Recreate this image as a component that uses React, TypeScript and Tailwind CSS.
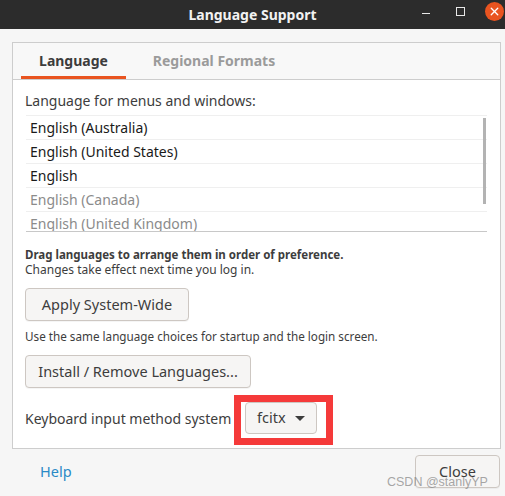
import { X } from "lucide-react";

const rows = [
  { label: "English (Australia)", active: true },
  { label: "English (United States)", active: true },
  { label: "English", active: true },
  { label: "English (Canada)", active: false },
  { label: "English (United Kingdom)", active: false },
];

function Button({ children, className = "" }: { children: React.ReactNode; className?: string }) {
  return (
    <button
      className={
        "h-[33px] rounded-[4px] border border-[#cdc7c2] bg-[#f6f5f4] text-[14.5px] text-[#3d3d3d] shadow-[0_1px_0_rgba(0,0,0,0.04)] " +
        className
      }
    >
      {children}
    </button>
  );
}

export default function App() {
  return (
    <div
      className="relative w-[505px] h-[496px] overflow-hidden bg-[#f6f6f6] text-[#3d3d3d]"
      style={{ fontFamily: '"Noto Sans", "Open Sans", sans-serif' }}
    >
      {/* Title bar */}
      <div className="relative h-[29px] bg-[#2c2c2c] flex items-center justify-center">
        <span className="text-[14px] font-bold text-[#f2f2f2] leading-none">Language Support</span>
        <div className="absolute right-0 top-0 h-[29px] flex items-center">
          <div className="w-[8px] h-[1.5px] bg-[#e8e8e8] mb-[2px] mr-[26px]" />
          <div className="w-[9px] h-[9px] border-[1.5px] border-[#e8e8e8] mb-[6px] mr-[20px]" />
          <div className="w-[19px] h-[19px] rounded-full bg-[#e95420] flex items-center justify-center mb-[7px] mr-[1px]">
            <X size={13} strokeWidth={2.5} className="text-white" />
          </div>
        </div>
      </div>

      {/* Notebook */}
      <div className="ml-[12px] mt-[13px] w-[489px] h-[407px] border border-[#cdcdcd] bg-white flex flex-col">
        <div className="h-[37px] shrink-0 bg-[#f8f8f8] border-b border-[#cdcdcd] flex pl-[8px]">
          <div className="relative w-[105px] flex items-center justify-center">
            <span className="text-[14px] font-bold text-[#3c3c3c] -mt-[2px]">Language</span>
            <div className="absolute left-0 right-0 bottom-0 h-[3px] bg-[#e95420]" />
          </div>
          <div className="w-[176px] flex items-center justify-center">
            <span className="text-[14px] font-bold text-[#9b9b9b] -mt-[2px]">Regional Formats</span>
          </div>
        </div>

        <div className="flex flex-col pl-[12px] pr-[13px]">
          <div className="mt-[12px] h-[18px] leading-[18px] text-[14px] text-[#3d3d3d]">
            Language for menus and windows:
          </div>

          {/* Language list */}
          <div className="relative mt-[5px] ml-[1px] h-[117px] overflow-hidden border-t border-[#efefef] border-b border-b-[#c8c8c8]">
            {rows.map((r) => (
              <div
                key={r.label}
                className={
                  "h-[24px] border-b border-[#efefef] pl-[4px] flex items-center text-[14px] " +
                  (r.active ? "text-[#1a1a1a]" : "text-[#8b8b8b]")
                }
              >
                {r.label}
              </div>
            ))}
            <div className="absolute right-[1px] top-[2px] w-[3px] h-[86px] bg-[#b3b3b3]" />
          </div>

          <div className="mt-[15px] text-[11.5px] leading-[15px] font-bold text-[#3d3d3d]">
            Drag languages to arrange them in order of preference.
          </div>
          <div className="text-[12px] leading-[15px] text-[#3d3d3d]">Changes take effect next time you log in.</div>

          <Button className="mt-[11px] w-[164px]">Apply System-Wide</Button>

          <div className="mt-[8px] text-[11.7px] leading-[15px] text-[#3d3d3d]">
            Use the same language choices for startup and the login screen.
          </div>

          <Button className="mt-[11px] w-[226px]">Install / Remove Languages...</Button>

          <div className="mt-[14px] flex items-center">
            <span className="text-[14px] text-[#3d3d3d] w-[220px]">Keyboard input method system</span>
            <div className="relative">
              <button className="h-[32px] w-[72px] rounded-[4px] border border-[#cdc7c2] bg-[#f6f5f4] flex items-center pl-[11px] gap-[9px] text-[14.5px] text-[#3d3d3d]">
                fcitx
                <svg width="10" height="5" viewBox="0 0 10 5">
                  <path d="M0 0 L10 0 L5 5 Z" fill="#3d3d3d" />
                </svg>
              </button>
              <div className="absolute -left-[11px] -top-[7px] w-[99px] h-[50px] border-[7px] border-[#f53a3a] pointer-events-none" />
            </div>
          </div>
        </div>
      </div>

      {/* Footer */}
      <div className="flex items-center justify-between pl-[40px] pr-[5px] mt-[7px]">
        <span className="text-[14.5px] text-[#2a8ac6]">Help</span>
        <Button className="w-[85px] -mt-[1px]">Close</Button>
      </div>

      <div
        className="absolute left-[387px] top-[473px] text-[12.5px] text-[#8a8a8a]/75 pointer-events-none"
        style={{ fontFamily: '"Liberation Sans", Arial, sans-serif' }}
      >
        CSDN @stanlyYP
      </div>
    </div>
  );
}
